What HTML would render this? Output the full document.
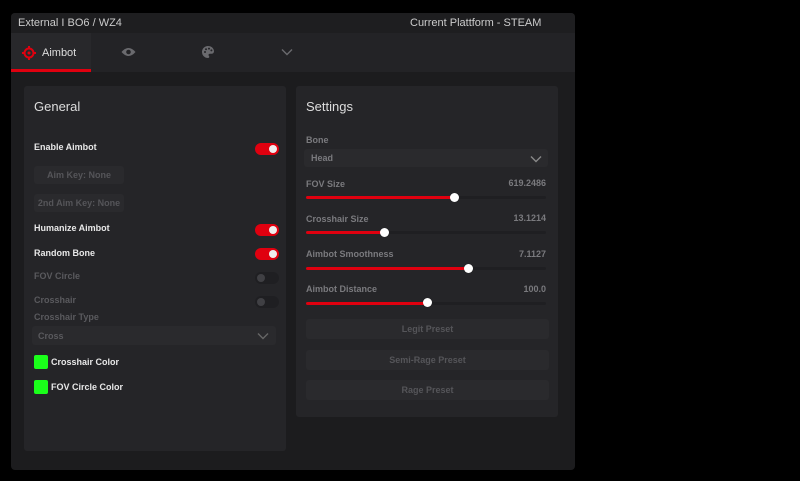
<!DOCTYPE html><html><head><style>
*{margin:0;padding:0;box-sizing:border-box}
body{width:800px;height:481px;background:#000;font-family:"Liberation Sans",sans-serif;position:relative;overflow:hidden}
.a{position:absolute}
.win{left:11px;top:13px;width:564px;height:457px;background:#1c1c1e;border-radius:4px;overflow:hidden}
.t{color:#ccc;font-size:11px}
.lbl{font-size:9px;font-weight:bold;color:#e8e8e8}
.dim{color:#5a5a5e}
.tog{width:24px;height:12px;border-radius:6px;background:#e0000f}
.tog:after{content:"";position:absolute;right:2px;top:2px;width:8px;height:8px;border-radius:50%;background:#eee}
.togo{width:24px;height:12px;border-radius:6px;background:#1f1f22}
.togo:after{content:"";position:absolute;left:2px;top:2px;width:8px;height:8px;border-radius:50%;background:#404044}
.btn{background:#2a2a2d;border-radius:3px;color:#555559;font-size:9px;font-weight:bold;text-align:center}
.trk{height:3px;background:#1f1f22;border-radius:2px}
.fill{height:3px;background:#e0000f;border-radius:2px}
.th{width:9px;height:9px;border-radius:50%;background:#fff}
.val{font-size:9px;font-weight:bold;color:#7a7a7e;text-align:right}
</style></head><body>
<div class="a win">
 <div class="a" style="left:0;top:0;width:564px;height:20px;background:#1e1e20"></div>
 <div class="a t" style="left:7px;top:4px">External I BO6 / WZ4</div>
 <div class="a t" style="left:399px;top:4px">Current Plattform - STEAM</div>
 <div class="a" style="left:0;top:20px;width:564px;height:39px;background:#232326"></div>
 <div class="a" style="left:0;top:20px;width:80px;height:39px;background:#28282b"></div>
 <div class="a" style="left:0;top:56px;width:80px;height:3px;background:#e0000f"></div>
 <svg class="a" style="left:11px;top:33px" width="14" height="14" viewBox="0 0 14 14"><circle cx="7" cy="7" r="4.5" fill="none" stroke="#e0000f" stroke-width="2"/><circle cx="7" cy="7" r="1.5" fill="#e0000f"/><path d="M7 0v3M7 11v3M0 7h3M11 7h3" stroke="#e0000f" stroke-width="2"/></svg>
 <div class="a" style="left:31px;top:34px;color:#ddd;font-size:11px">Aimbot</div>
 <svg class="a" style="left:110px;top:33px" width="15" height="12" viewBox="0 0 15 12"><path d="M0.5 6Q7.5-2 14.5 6Q7.5 14 0.5 6Z" fill="#6a6a6e"/><circle cx="7.5" cy="6" r="2.3" fill="#232326"/></svg>
 <svg class="a" style="left:190px;top:32px" width="14" height="14" viewBox="0 0 14 14"><path d="M7 1A6 6 0 0 0 7 13C8.5 13 8.5 11.5 7.8 10.8C7 10 7.8 8.8 9 8.8H10.5A2.5 2.5 0 0 0 13 6.3C13 3.4 10.3 1 7 1Z" fill="#6a6a6e"/><circle cx="4" cy="7" r="1" fill="#232326"/><circle cx="5" cy="4.2" r="1" fill="#232326"/><circle cx="8" cy="3.6" r="1" fill="#232326"/><circle cx="10.4" cy="5.4" r="1" fill="#232326"/></svg>
 <svg class="a" style="left:270px;top:35px" width="12" height="8" viewBox="0 0 12 8"><path d="M1 1.5L6 6.5L11 1.5" fill="none" stroke="#6a6a6e" stroke-width="1.4"/></svg>
</div>
<div class="a" style="left:24px;top:86px;width:262px;height:365px;background:#252528;border-radius:3px"></div>
<div class="a" style="left:34px;top:99px;color:#ddd;font-size:13px">General</div>
<div class="a lbl" style="left:34px;top:142px">Enable Aimbot</div>
<div class="a tog" style="left:255px;top:143px"></div>
<div class="a btn" style="left:34px;top:166px;width:90px;height:18px;line-height:18px">Aim Key: None</div>
<div class="a btn" style="left:34px;top:194px;width:90px;height:18px;line-height:18px">2nd Aim Key: None</div>
<div class="a lbl" style="left:34px;top:223px">Humanize Aimbot</div>
<div class="a tog" style="left:255px;top:224px"></div>
<div class="a lbl" style="left:34px;top:248px">Random Bone</div>
<div class="a tog" style="left:255px;top:248px"></div>
<div class="a lbl dim" style="left:34px;top:271px">FOV Circle</div>
<div class="a togo" style="left:255px;top:272px"></div>
<div class="a lbl dim" style="left:34px;top:295px">Crosshair</div>
<div class="a togo" style="left:255px;top:296px"></div>
<div class="a lbl dim" style="left:34px;top:312px">Crosshair Type</div>
<div class="a" style="left:32px;top:326px;width:244px;height:19px;background:#2a2a2d;border-radius:3px"></div>
<div class="a lbl dim" style="left:38px;top:331px">Cross</div>
<svg class="a" style="left:257px;top:332px" width="12" height="8" viewBox="0 0 12 8"><path d="M1 1.5L6 6.5L11 1.5" fill="none" stroke="#666" stroke-width="1.4"/></svg>
<div class="a" style="left:34px;top:355px;width:14px;height:14px;background:#1aff1a;border-radius:2px"></div>
<div class="a lbl" style="left:51px;top:357px">Crosshair Color</div>
<div class="a" style="left:34px;top:380px;width:14px;height:14px;background:#1aff1a;border-radius:2px"></div>
<div class="a lbl" style="left:51px;top:382px">FOV Circle Color</div>
<div class="a" style="left:296px;top:86px;width:262px;height:331px;background:#252528;border-radius:3px"></div>
<div class="a" style="left:306px;top:99px;color:#ddd;font-size:13px">Settings</div>
<div class="a lbl" style="left:306px;top:135px;color:#7a7a7e">Bone</div>
<div class="a" style="left:304px;top:149px;width:244px;height:18px;background:#2a2a2d;border-radius:3px"></div>
<div class="a lbl" style="left:311px;top:153px;color:#7a7a7e">Head</div>
<svg class="a" style="left:530px;top:155px" width="12" height="8" viewBox="0 0 12 8"><path d="M1 1.5L6 6.5L11 1.5" fill="none" stroke="#888" stroke-width="1.4"/></svg>
<div class="a lbl" style="left:306px;top:179px;color:#7a7a7e">FOV Size</div>
<div class="a val" style="left:446px;top:178px;width:100px">619.2486</div>
<div class="a trk" style="left:306px;top:196px;width:240px"></div>
<div class="a fill" style="left:306px;top:196px;width:148px"></div>
<div class="a th" style="left:450px;top:193px"></div>
<div class="a lbl" style="left:306px;top:214px;color:#7a7a7e">Crosshair Size</div>
<div class="a val" style="left:446px;top:213px;width:100px">13.1214</div>
<div class="a trk" style="left:306px;top:231px;width:240px"></div>
<div class="a fill" style="left:306px;top:231px;width:78px"></div>
<div class="a th" style="left:380px;top:228px"></div>
<div class="a lbl" style="left:306px;top:249px;color:#7a7a7e">Aimbot Smoothness</div>
<div class="a val" style="left:446px;top:249px;width:100px">7.1127</div>
<div class="a trk" style="left:306px;top:267px;width:240px"></div>
<div class="a fill" style="left:306px;top:267px;width:162px"></div>
<div class="a th" style="left:464px;top:264px"></div>
<div class="a lbl" style="left:306px;top:284px;color:#7a7a7e">Aimbot Distance</div>
<div class="a val" style="left:446px;top:284px;width:100px">100.0</div>
<div class="a trk" style="left:306px;top:302px;width:240px"></div>
<div class="a fill" style="left:306px;top:302px;width:121px"></div>
<div class="a th" style="left:423px;top:298px"></div>
<div class="a btn" style="left:306px;top:319px;width:243px;height:20px;line-height:20px">Legit Preset</div>
<div class="a btn" style="left:306px;top:350px;width:243px;height:20px;line-height:20px">Semi-Rage Preset</div>
<div class="a btn" style="left:306px;top:380px;width:243px;height:20px;line-height:20px">Rage Preset</div>
</body></html>
